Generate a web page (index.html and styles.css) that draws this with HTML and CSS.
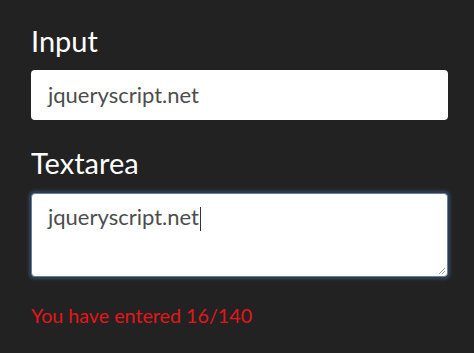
FILE: index.html
```html
<!DOCTYPE html>
<html lang="en">
<head>
<meta charset="utf-8">
<title>Character counter</title>
<link rel="stylesheet" href="styles.css">
</head>
<body>
<main class="form">
  <label class="label">Input</label>
  <div class="field">jqueryscript.net</div>
  <label class="label label-second">Textarea</label>
  <div class="area">
    <span class="area-text">jqueryscript.net</span><span class="caret"></span>
    <svg class="grip" width="9" height="9" viewBox="0 0 9 9" aria-hidden="true">
      <path d="M8 2 L2 8 M8 5 L5 8" stroke="#9a9a9a" stroke-width="1" fill="none"/>
    </svg>
  </div>
  <p class="counter">You have entered 16/140</p>
</main>
</body>
</html>
```
FILE: styles.css
```css
html, body {
  margin: 0;
  padding: 0;
  background: #222222;
  height: 100%;
}
body {
  font-family: Lato, "Open Sans", sans-serif;
}
.form {
  padding: 23px 26px 0 31px;
  display: flex;
  flex-direction: column;
}
.label {
  color: #ffffff;
  font-size: 29px;
  line-height: 35px;
}
.label-second {
  margin-top: 25px;
}
.field {
  margin-top: 12px;
  height: 50px;
  box-sizing: border-box;
  background: #ffffff;
  border-radius: 4px;
  padding: 12px 17px;
  font-size: 22px;
  line-height: 26px;
  color: #4d4d4d;
}
.area {
  position: relative;
  margin-top: 13px;
  height: 84px;
  box-sizing: border-box;
  background: #ffffff;
  border: 1px solid #6b7e95;
  border-radius: 4px;
  box-shadow: 0 0 0 2px #2b3a4c, 0 0 3px 3px rgba(60, 85, 115, 0.45);
  padding: 10px 16px;
  font-size: 22px;
  line-height: 26px;
  color: #4d4d4d;
}
.caret {
  display: inline-block;
  width: 1px;
  height: 24px;
  background: #333333;
  vertical-align: -6px;
  margin-left: 1px;
}
.grip {
  position: absolute;
  right: 1px;
  bottom: 1px;
}
.counter {
  margin: 27px 0 0;
  color: #e3161c;
  font-size: 19.7px;
  line-height: 24px;
}
```
